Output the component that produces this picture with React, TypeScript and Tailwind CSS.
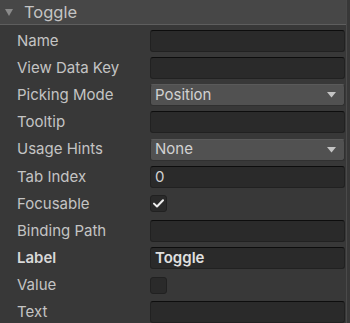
import React from 'react';

type Row =
  | { label: string; kind: 'text'; value?: string; bold?: boolean }
  | { label: string; kind: 'select'; value: string }
  | { label: string; kind: 'check'; checked: boolean };

const rows: Row[] = [
  { label: 'Name', kind: 'text' },
  { label: 'View Data Key', kind: 'text' },
  { label: 'Picking Mode', kind: 'select', value: 'Position' },
  { label: 'Tooltip', kind: 'text' },
  { label: 'Usage Hints', kind: 'select', value: 'None' },
  { label: 'Tab Index', kind: 'text', value: '0' },
  { label: 'Focusable', kind: 'check', checked: true },
  { label: 'Binding Path', kind: 'text' },
  { label: 'Label', kind: 'text', value: 'Toggle', bold: true },
  { label: 'Value', kind: 'check', checked: false },
  { label: 'Text', kind: 'text' },
];

const Field: React.FC<{ row: Row }> = ({ row }) => {
  if (row.kind === 'select') {
    return (
      <div className="h-[22px] flex-1 flex items-center justify-between rounded-[3px] bg-[#515151] border border-[#303030] border-t-[#5a5a5a] pl-[4px] pr-[8px] text-[#d2d2d2]">
        <span>{row.value}</span>
        <svg width="9" height="6" viewBox="0 0 9 6">
          <path d="M0 0 L9 0 L4.5 5.5 Z" fill="#c4c4c4" />
        </svg>
      </div>
    );
  }
  if (row.kind === 'check') {
    return (
      <div className="flex-1 flex items-center">
        <div className="w-[17px] h-[17px] rounded-[3px] bg-[#2a2a2a] border border-[#212121] flex items-center justify-center">
          {row.checked && (
            <svg width="11" height="9" viewBox="0 0 11 9">
              <path d="M1 4.6 L4 7.5 L10 1.2" stroke="#eeeeee" strokeWidth="2" fill="none" strokeLinecap="round" strokeLinejoin="round" />
            </svg>
          )}
        </div>
      </div>
    );
  }
  return (
    <div
      className={`h-[22px] flex-1 flex items-center rounded-[3px] bg-[#2a2a2a] border border-[#212121] border-t-[#0d0d0d] px-[4px] ${
        row.bold ? 'font-semibold text-[#e0e0e0]' : 'text-[#d2d2d2]'
      }`}
    >
      {row.value}
    </div>
  );
};

export default function App() {
  return (
    <div
      className="w-[350px] h-[323px] overflow-hidden bg-[#383838] text-[15px] flex"
      style={{ fontFamily: 'Inter, "Liberation Sans", sans-serif' }}
    >
      <div className="w-[347px] border-r border-[#4a4a4a] flex flex-col">
        <div className="h-[25px] shrink-0 flex items-center bg-[#474747] border-b border-[#5e5e5e] text-[#c4c4c4] text-[16.5px]">
          <svg width="8" height="7" viewBox="0 0 8 7" className="ml-[5px] mr-[11px]">
            <path d="M0 0 L8 0 L4 7 Z" fill="#8a8a8a" />
          </svg>
          <span>Toggle</span>
        </div>
        <div className="pt-[2.5px] pr-[1px]">
          {rows.map((row) => (
            <div key={row.label} className="h-[27.15px] flex items-center">
              <span
                className={`w-[150px] shrink-0 pl-[17px] ${
                  row.label === 'Label' ? 'font-semibold text-[#d8d8d8]' : 'text-[#c4c4c4]'
                }`}
              >
                {row.label}
              </span>
              <Field row={row} />
            </div>
          ))}
        </div>
      </div>
    </div>
  );
}
